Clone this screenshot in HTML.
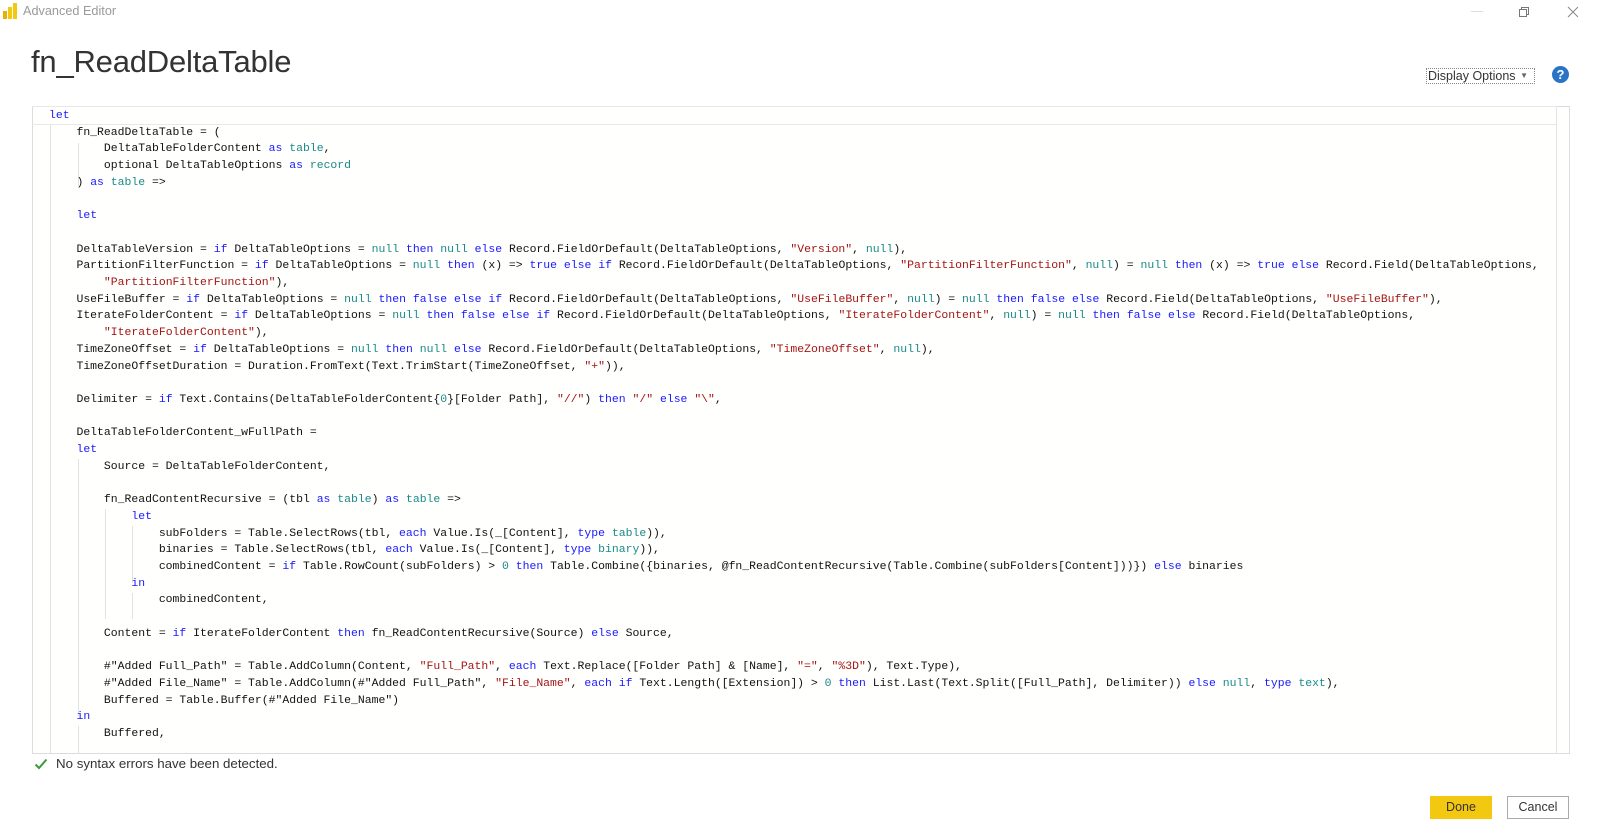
<!DOCTYPE html>
<html><head><meta charset="utf-8">
<style>
body{margin:0;width:1600px;height:827px;background:#fff;position:relative;overflow:hidden;font-family:"Liberation Sans",sans-serif;}
.tb{position:absolute;left:23px;top:4px;font-size:12.7px;color:#9a9a9a;}
.title{position:absolute;left:31px;top:44px;font-size:31px;color:#333;letter-spacing:-0.2px}
.ed{position:absolute;left:32px;top:106px;width:1536px;height:646px;border:1px solid #dcdcdc;background:#fffffd;}
.hl{position:absolute;left:32px;top:106px;width:1524px;height:17px;border:1px solid #e8e8e8;border-left:none;}
.sb{position:absolute;left:1556px;top:106px;width:1px;height:647px;background:#e4e4e4;}
pre{position:absolute;left:49px;top:108px;margin:0;font-family:"Liberation Mono",monospace;font-size:11.45px;line-height:16.7px;color:#111;}
.k{color:#1a1aff}.t{color:#1a8a8a}.s{color:#a31515}
.g{position:absolute;width:1px;background:#e2e2e2;}
.btn{position:absolute;font-size:12.5px;text-align:center;color:#333;}
</style></head><body>
<svg style="position:absolute;left:3px;top:3px" width="14" height="16"><rect x="0" y="8" width="4" height="8" fill="#e8b100"/><rect x="5" y="4" width="4" height="12" fill="#f2c811"/><rect x="10" y="0" width="4" height="16" fill="#f2c811"/></svg>
<div class="tb">Advanced Editor</div>
<div style="position:absolute;left:1471px;top:11px;width:12px;height:1px;background:#ddd"></div>
<svg style="position:absolute;left:1518px;top:6px" width="12" height="12"><rect x="1.5" y="3.5" width="7" height="7" fill="none" stroke="#777"/><path d="M3.5 3.5V1.5H10.5V8.5H8.5" fill="none" stroke="#777"/></svg>
<svg style="position:absolute;left:1567px;top:6px" width="12" height="12"><path d="M1 1L11 11M11 1L1 11" stroke="#888" stroke-width="1"/></svg>
<div class="title">fn_ReadDeltaTable</div>
<div style="position:absolute;left:1426px;top:68px;width:106px;height:14px;border:1px dotted #888;font-size:12.5px;color:#333;line-height:14px;padding-left:1px;white-space:nowrap">Display Options <span style="position:absolute;right:6px;top:0;font-size:8px;color:#666">▼</span></div>
<div style="position:absolute;left:1552px;top:66px;width:17px;height:17px;border-radius:50%;background:#2a73c5;color:#fff;font-weight:bold;font-size:13px;text-align:center;line-height:17px">?</div>
<div class="ed"></div>
<div class="hl"></div>
<div class="sb"></div>
<div class="g" style="left:50px;top:124px;height:629px"></div>
<div class="g" style="left:78px;top:143px;height:43px"></div>
<div class="g" style="left:78px;top:459px;height:257px"></div>
<div class="g" style="left:105px;top:509px;height:110px"></div>
<div class="g" style="left:132px;top:526px;height:57px"></div>
<div class="g" style="left:132px;top:593px;height:26px"></div>
<div class="g" style="left:78px;top:726px;height:27px"></div>
<pre><span class="k">let</span>
    fn_ReadDeltaTable = (
        DeltaTableFolderContent <span class="k">as</span> <span class="t">table</span>,
        optional DeltaTableOptions <span class="k">as</span> <span class="t">record</span>
    ) <span class="k">as</span> <span class="t">table</span> =&gt;

    <span class="k">let</span>

    DeltaTableVersion = <span class="k">if</span> DeltaTableOptions = <span class="t">null</span> <span class="k">then</span> <span class="t">null</span> <span class="k">else</span> Record.FieldOrDefault(DeltaTableOptions, <span class="s">"Version"</span>, <span class="t">null</span>),
    PartitionFilterFunction = <span class="k">if</span> DeltaTableOptions = <span class="t">null</span> <span class="k">then</span> (x) =&gt; <span class="k">true</span> <span class="k">else</span> <span class="k">if</span> Record.FieldOrDefault(DeltaTableOptions, <span class="s">"PartitionFilterFunction"</span>, <span class="t">null</span>) = <span class="t">null</span> <span class="k">then</span> (x) =&gt; <span class="k">true</span> <span class="k">else</span> Record.Field(DeltaTableOptions,
        <span class="s">"PartitionFilterFunction"</span>),
    UseFileBuffer = <span class="k">if</span> DeltaTableOptions = <span class="t">null</span> <span class="k">then</span> <span class="k">false</span> <span class="k">else</span> <span class="k">if</span> Record.FieldOrDefault(DeltaTableOptions, <span class="s">"UseFileBuffer"</span>, <span class="t">null</span>) = <span class="t">null</span> <span class="k">then</span> <span class="k">false</span> <span class="k">else</span> Record.Field(DeltaTableOptions, <span class="s">"UseFileBuffer"</span>),
    IterateFolderContent = <span class="k">if</span> DeltaTableOptions = <span class="t">null</span> <span class="k">then</span> <span class="k">false</span> <span class="k">else</span> <span class="k">if</span> Record.FieldOrDefault(DeltaTableOptions, <span class="s">"IterateFolderContent"</span>, <span class="t">null</span>) = <span class="t">null</span> <span class="k">then</span> <span class="k">false</span> <span class="k">else</span> Record.Field(DeltaTableOptions,
        <span class="s">"IterateFolderContent"</span>),
    TimeZoneOffset = <span class="k">if</span> DeltaTableOptions = <span class="t">null</span> <span class="k">then</span> <span class="t">null</span> <span class="k">else</span> Record.FieldOrDefault(DeltaTableOptions, <span class="s">"TimeZoneOffset"</span>, <span class="t">null</span>),
    TimeZoneOffsetDuration = Duration.FromText(Text.TrimStart(TimeZoneOffset, <span class="s">"+"</span>)),

    Delimiter = <span class="k">if</span> Text.Contains(DeltaTableFolderContent{<span class="t">0</span>}[Folder Path], <span class="s">"//"</span>) <span class="k">then</span> <span class="s">"/"</span> <span class="k">else</span> <span class="s">"\"</span>,

    DeltaTableFolderContent_wFullPath =
    <span class="k">let</span>
        Source = DeltaTableFolderContent,

        fn_ReadContentRecursive = (tbl <span class="k">as</span> <span class="t">table</span>) <span class="k">as</span> <span class="t">table</span> =&gt;
            <span class="k">let</span>
                subFolders = Table.SelectRows(tbl, <span class="k">each</span> Value.Is(_[Content], <span class="k">type</span> <span class="t">table</span>)),
                binaries = Table.SelectRows(tbl, <span class="k">each</span> Value.Is(_[Content], <span class="k">type</span> <span class="t">binary</span>)),
                combinedContent = <span class="k">if</span> Table.RowCount(subFolders) &gt; <span class="t">0</span> <span class="k">then</span> Table.Combine({binaries, @fn_ReadContentRecursive(Table.Combine(subFolders[Content]))}) <span class="k">else</span> binaries
            <span class="k">in</span>
                combinedContent,

        Content = <span class="k">if</span> IterateFolderContent <span class="k">then</span> fn_ReadContentRecursive(Source) <span class="k">else</span> Source,

        #"Added Full_Path" = Table.AddColumn(Content, <span class="s">"Full_Path"</span>, <span class="k">each</span> Text.Replace([Folder Path] &amp; [Name], <span class="s">"="</span>, <span class="s">"%3D"</span>), Text.Type),
        #"Added File_Name" = Table.AddColumn(#"Added Full_Path", <span class="s">"File_Name"</span>, <span class="k">each</span> <span class="k">if</span> Text.Length([Extension]) &gt; <span class="t">0</span> <span class="k">then</span> List.Last(Text.Split([Full_Path], Delimiter)) <span class="k">else</span> <span class="t">null</span>, <span class="k">type</span> <span class="t">text</span>),
        Buffered = Table.Buffer(#"Added File_Name")
    <span class="k">in</span>
        Buffered,</pre>
<svg style="position:absolute;left:34px;top:758px" width="14" height="12"><path d="M1.5 6.5L5 10L12.5 1.5" fill="none" stroke="#3c9a3c" stroke-width="2"/></svg>
<div style="position:absolute;left:56px;top:756px;font-size:13.3px;color:#333">No syntax errors have been detected.</div>
<div class="btn" style="left:1430px;top:796px;width:62px;height:23px;line-height:23px;background:#f2c811">Done</div>
<div class="btn" style="left:1507px;top:796px;width:60px;height:21px;line-height:21px;border:1px solid #aaa;background:#fff">Cancel</div>
</body></html>
